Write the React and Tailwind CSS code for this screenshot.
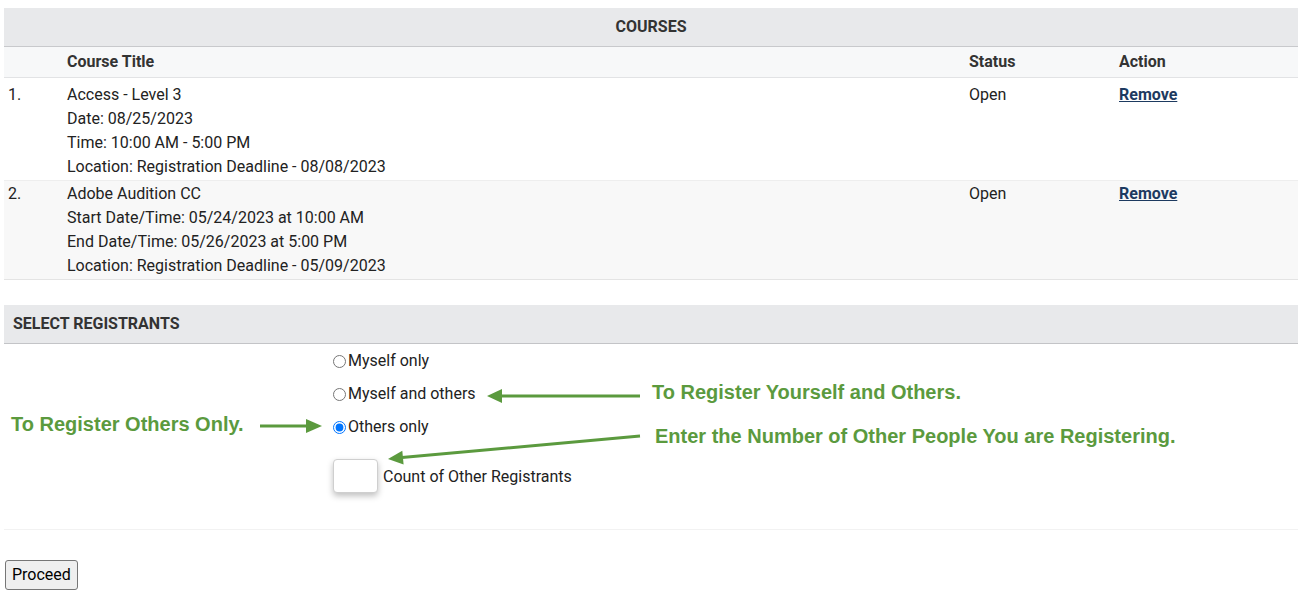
import React from "react";

const courses = [
  {
    n: "1.",
    lines: [
      "Access - Level 3",
      "Date: 08/25/2023",
      "Time: 10:00 AM - 5:00 PM",
      "Location: Registration Deadline - 08/08/2023",
    ],
    status: "Open",
  },
  {
    n: "2.",
    lines: [
      "Adobe Audition CC",
      "Start Date/Time: 05/24/2023 at 10:00 AM",
      "End Date/Time: 05/26/2023 at 5:00 PM",
      "Location: Registration Deadline - 05/09/2023",
    ],
    status: "Open",
  },
];

const GREEN = "#5b9a3e";

const Annotations = () => (
  <div className="pointer-events-none absolute inset-0">
    <svg className="absolute left-0 top-0" width="1305" height="599">
      {/* others only */}
      <line x1="260" y1="426" x2="308" y2="426" stroke={GREEN} strokeWidth="3" />
      <polygon points="306,419 322,426 306,433" fill={GREEN} />
      {/* myself and others */}
      <line x1="640" y1="396" x2="500" y2="396" stroke={GREEN} strokeWidth="3" />
      <polygon points="502,389 487,396 502,403" fill={GREEN} />
      {/* count */}
      <line x1="640" y1="436" x2="402" y2="457.6" stroke={GREEN} strokeWidth="3" />
      <polygon points="403.6,464.6 388,459 402.3,450.7" fill={GREEN} />
    </svg>
    <span className="absolute left-[11px] top-[412px] text-[20px] font-bold leading-[24px] text-[#5b9a3e] [font-family:'Liberation_Sans',sans-serif]">
      To Register Others Only.
    </span>
    <span className="absolute left-[652px] top-[380px] text-[20px] font-bold leading-[24px] text-[#5b9a3e] [font-family:'Liberation_Sans',sans-serif]">
      To Register Yourself and Others.
    </span>
    <span className="absolute left-[655px] top-[424px] text-[20px] font-bold leading-[24px] text-[#5b9a3e] [font-family:'Liberation_Sans',sans-serif]">
      Enter the Number of Other People You are Registering.
    </span>
  </div>
);

export default function App() {
  return (
    <div className="relative h-[599px] w-[1305px] overflow-hidden bg-white pt-[8px] text-[#222] [font-family:Roboto,sans-serif]">
      {/* Courses table */}
      <div className="mx-[4px] w-[1294px]">
        <div className="flex h-[39px] items-center justify-center border-b border-[#c8c9cc] bg-[#e8e9eb] text-[16px] font-bold text-[#333]">
          COURSES
        </div>
        <div className="grid h-[31px] grid-cols-[63px_902px_150px_1fr] items-center border-b border-[#e2e3e5] bg-[#f7f8f9] text-[16px] font-bold text-[#333]">
          <div />
          <div>Course Title</div>
          <div>Status</div>
          <div>Action</div>
        </div>
        {courses.map((c, i) => (
          <div
            key={c.n}
            className={
              i === 0
                ? "grid grid-cols-[63px_902px_150px_1fr] pb-[1px] pt-[5px] text-[16px] leading-[24px]"
                : "grid grid-cols-[63px_902px_150px_1fr] border-b border-t border-[#e4e4e4] border-t-[#eeeeee] border-t-dotted bg-[#f8f8f8] pb-[1px] pt-[1px] text-[16px] leading-[24px]"
            }
          >
            <div className="pl-[4px]">{c.n}</div>
            <div>
              {c.lines.map((l) => (
                <div key={l}>{l}</div>
              ))}
            </div>
            <div>{c.status}</div>
            <div>
              <a href="#" className="font-bold text-[#1d3a60] underline">
                Remove
              </a>
            </div>
          </div>
        ))}

        {/* Select registrants */}
        <div className="mt-[25px] flex h-[39px] items-center border-b border-[#c3c4c7] bg-[#e8e9eb] pl-[9px] text-[16px] font-bold text-[#333]">
          SELECT REGISTRANTS
        </div>
        <div className="border-b border-[#f2f2f2] pb-[36px] pl-[329px] pt-[6px] text-[16px]">
          <div className="flex flex-col gap-[11px]">
            <label className="flex h-[22px] items-center gap-[2px]">
              <input type="radio" name="reg" className="m-0 h-[13px] w-[13px]" />
              Myself only
            </label>
            <label className="flex h-[22px] items-center gap-[2px]">
              <input type="radio" name="reg" className="m-0 h-[13px] w-[13px]" />
              Myself and others
            </label>
            <label className="flex h-[22px] items-center gap-[2px]">
              <input type="radio" name="reg" defaultChecked className="m-0 h-[13px] w-[13px]" />
              Others only
            </label>
          </div>
          <div className="mt-[21px] flex items-center gap-[5px]">
            <input
              type="text"
              className="h-[34px] w-[45px] rounded-[4px] border border-[#cfcfcf] bg-white shadow-[0_3px_6px_rgba(0,0,0,0.25)]"
            />
            <span className="pt-[2px]">Count of Other Registrants</span>
          </div>
        </div>
      </div>

      <div className="mt-[30px] pl-[5px]">
        <button className="h-[30px] rounded-[3px] border border-[#767676] bg-[#efefef] px-[6px] text-[16px] text-black">
          Proceed
        </button>
      </div>

      <Annotations />
    </div>
  );
}
